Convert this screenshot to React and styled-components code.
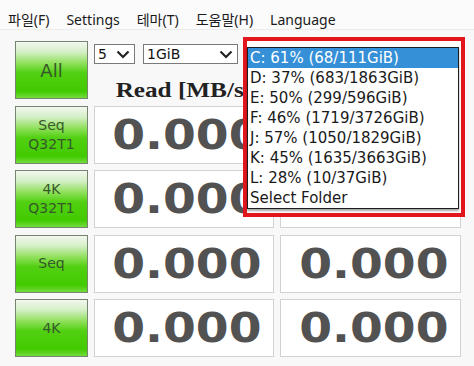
import styled, { createGlobalStyle } from "styled-components";

const GlobalStyle = createGlobalStyle`
  html, body {
    margin: 0;
    padding: 0;
    background: #f8f8f8;
  }
  body {
    font-family: "DejaVu Sans", sans-serif;
  }
`;

const menuItems = ["파일(F)", "Settings", "테마(T)", "도움말(H)", "Language"];

const drives = [
  "C: 61% (68/111GiB)",
  "D: 37% (683/1863GiB)",
  "E: 50% (299/596GiB)",
  "F: 46% (1719/3726GiB)",
  "J: 57% (1050/1829GiB)",
  "K: 45% (1635/3663GiB)",
  "L: 28% (10/37GiB)",
  "Select Folder",
];

const tests = [
  ["Seq", "Q32T1"],
  ["4K", "Q32T1"],
  ["Seq"],
  ["4K"],
];

function Chevron() {
  return (
    <svg width="14" height="9" viewBox="0 0 14 9">
      <polyline
        points="1.5,1.5 7,7 12.5,1.5"
        fill="none"
        stroke="#222"
        strokeWidth="2.2"
      />
    </svg>
  );
}

function App() {
  return (
    <Page>
      <GlobalStyle />
      <MenuBar>
        {menuItems.map((m) => (
          <MenuItem key={m}>{m}</MenuItem>
        ))}
      </MenuBar>
      <Main>
        <TestButton $big>All</TestButton>
        <Header>
          <Selects>
            <Select $w={41}>
              <span>5</span>
              <Chevron />
            </Select>
            <Select $w={95}>
              <span>1GiB</span>
              <Chevron />
            </Select>
          </Selects>
          <Title>
            <span>Read [MB/s]</span>
          </Title>
        </Header>
        {/* drive selector + write title sit under the open list */}
        <Header />
        {tests.map((t, i) => [
          <TestButton key={"b" + i}>
            {t.map((line) => (
              <div key={line}>{line}</div>
            ))}
          </TestButton>,
          <ValueBox key={"r" + i}>
            <span>0.000</span>
          </ValueBox>,
          <ValueBox key={"w" + i}>
            <span>0.000</span>
          </ValueBox>,
        ])}
      </Main>
      <DropFrame>
        <DropList>
          {drives.map((d, i) => (
            <DropItem key={d} $active={i === 0}>
              {d}
            </DropItem>
          ))}
        </DropList>
      </DropFrame>
    </Page>
  );
}

const Page = styled.div`
  position: relative;
  width: 474px;
  height: 366px;
  overflow: hidden;
`;

const MenuBar = styled.div`
  display: flex;
  height: 30px;
  padding-top: 9px;
  box-sizing: border-box;
  border-bottom: 1px solid #ececec;
  background: #fbfbfb;
  font-family: "Noto Sans", "Noto Sans CJK KR", sans-serif;
  font-size: 14px;
  color: #1a1a1a;
`;

const MenuItem = styled.div`
  padding: 0 8.5px;
  line-height: 22px;
  &:first-child {
    padding-left: 8px;
  }
`;

const Main = styled.div`
  display: grid;
  grid-template-columns: 73px 180px 181px;
  grid-template-rows: repeat(5, 58px);
  column-gap: 6px;
  row-gap: 6.5px;
  padding: 11px 0 0 15px;
`;

const TestButton = styled.div`
  display: flex;
  flex-direction: column;
  align-items: center;
  justify-content: center;
  box-sizing: border-box;
  border: 1px solid #76866e;
  background: linear-gradient(
    #f3f7f1 0%,
    #d4efc6 18%,
    #8fe05a 38%,
    #52d012 55%,
    #42ca00 88%,
    #74dc3e 100%
  );
  color: #35592a;
  font-size: ${(p) => (p.$big ? "18px" : "14px")};
  line-height: 19px;
`;

const Header = styled.div`
  display: flex;
  flex-direction: column;
  justify-content: flex-end;
  box-sizing: border-box;
`;

const Selects = styled.div`
  display: flex;
  gap: 8px;
  margin-top: 3px;
  margin-bottom: auto;
`;

const Select = styled.div`
  display: flex;
  align-items: center;
  justify-content: space-between;
  width: ${(p) => p.$w}px;
  height: 20px;
  box-sizing: border-box;
  padding: 0 4px 0 3px;
  border: 1px solid #7a7a7a;
  background: #fff;
  font-size: 14px;
  color: #111;
`;

const Title = styled.div`
  text-align: center;
  font-family: "Liberation Serif", serif;
  font-weight: bold;
  font-size: 21px;
  color: #222;
  line-height: 26px;
  margin-bottom: -4px;
  span {
    display: inline-block;
    transform: scaleX(1.2);
  }
`;

const ValueBox = styled.div`
  display: flex;
  align-items: center;
  justify-content: flex-end;
  padding-right: 11px;
  box-sizing: border-box;
  background: #fff;
  border: 1px solid #d2d2d2;
  font-weight: bold;
  font-size: 40px;
  color: #525252;
  span {
    display: inline-block;
    transform: scaleX(1.18);
    transform-origin: right center;
  }
`;

const DropFrame = styled.div`
  position: absolute;
  left: 243px;
  top: 37px;
  width: 222px;
  height: 180px;
  box-sizing: border-box;
  border: 4px solid #e2161d;
  padding: 6px 2px 3px 0;
  background: #fff;
`;

const DropList = styled.div`
  border: 1px solid #1c1c1c;
  box-shadow: 0 2px 2px rgba(0, 0, 0, 0.35);
  background: #fff;
`;

const DropItem = styled.div`
  height: 20px;
  line-height: 20px;
  padding-left: 2px;
  font-size: 15px;
  white-space: nowrap;
  color: ${(p) => (p.$active ? "#fff" : "#1a1a1a")};
  background: ${(p) => (p.$active ? "#3590d8" : "transparent")};
`;

export default App;
